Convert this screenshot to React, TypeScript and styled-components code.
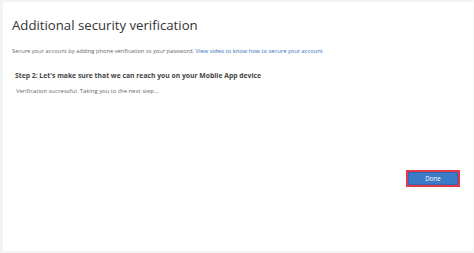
import React from 'react';
import styled, { createGlobalStyle } from 'styled-components';

const GlobalStyle = createGlobalStyle`
  html, body {
    margin: 0;
    padding: 0;
    background: #ffffff;
  }
  body {
    font-family: 'Open Sans', 'Liberation Sans', sans-serif;
  }
`;

// Outer frame with faint gray edges
const Frame = styled.div`
  width: 474px;
  height: 253px;
  box-sizing: border-box;
  border-top: 2px solid #f4f4f4;
  border-left: 3px solid #f2f2f2;
  border-bottom: 2px solid #f5f5f5;
  border-right: 1px solid #f8f8f8;
  background: #ffffff;
  display: flex;
  flex-direction: column;
  padding: 13px 13px 0 9px;
`;

const Title = styled.h1`
  margin: 0;
  font-size: 13.2px;
  font-weight: 400;
  color: #333333;
  line-height: 20px;
`;

const Intro = styled.p`
  margin: 12px 0 0 0;
  font-size: 5.75px;
  color: #666666;
  line-height: 8px;
`;

const Link = styled.a`
  color: #2f6fb5;
  text-decoration: none;
`;

const StepHeading = styled.h2`
  margin: 16px 0 0 3px;
  font-size: 6.8px;
  font-weight: 700;
  color: #444444;
  line-height: 10px;
`;

const Status = styled.p`
  margin: 6px 0 0 4px;
  font-size: 5.9px;
  color: #666666;
  line-height: 8px;
`;

const Actions = styled.div`
  display: flex;
  justify-content: flex-end;
  margin-top: 75px;
`;

const Highlight = styled.div`
  border: 2px solid #e0394a;
  display: flex;
`;

const DoneButton = styled.button`
  width: 50px;
  height: 13px;
  border: 1px solid #2f67b0;
  background: #3b7ac6;
  color: #ffffff;
  font-family: 'Open Sans', 'Liberation Sans', sans-serif;
  font-size: 6.2px;
  padding: 0;
  line-height: 11px;
  cursor: pointer;
`;

export default function App() {
  return (
    <>
      <GlobalStyle />
      <Frame>
        <Title>Additional security verification</Title>
        <Intro>
          Secure your account by adding phone verification to your password.{' '}
          <Link href="#">View video to know how to secure your account</Link>
        </Intro>
        <StepHeading>Step 2: Let's make sure that we can reach you on your Mobile App device</StepHeading>
        <Status>Verification successful. Taking you to the next step...</Status>
        <Actions>
          <Highlight>
            <DoneButton>Done</DoneButton>
          </Highlight>
        </Actions>
      </Frame>
    </>
  );
}
